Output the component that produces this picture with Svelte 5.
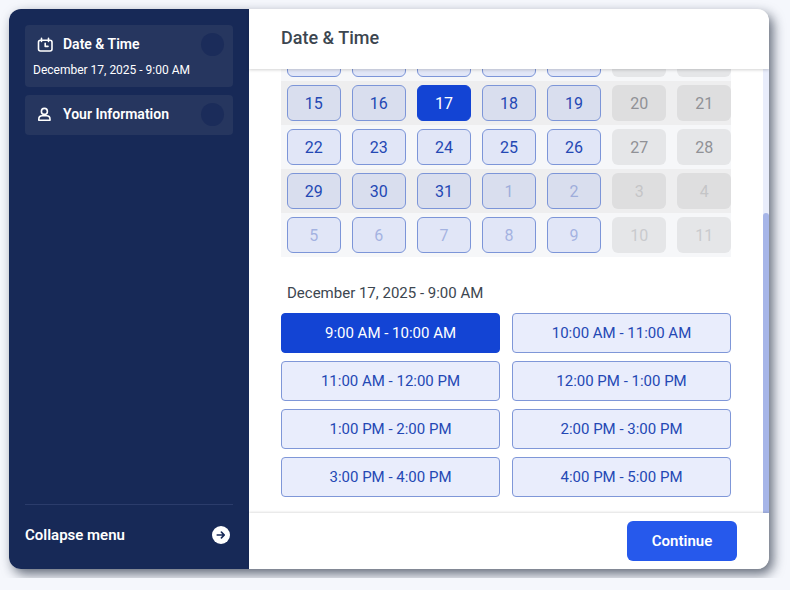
<script>
  const weeks = [
    [null, null, null, null, null, null, null],
    [15, 16, 17, 18, 19, 20, 21],
    [22, 23, 24, 25, 26, 27, 28],
    [29, 30, 31, 1, 2, 3, 4],
    [5, 6, 7, 8, 9, 10, 11]
  ];
  const slots = [
    '9:00 AM - 10:00 AM',
    '10:00 AM - 11:00 AM',
    '11:00 AM - 12:00 PM',
    '12:00 PM - 1:00 PM',
    '1:00 PM - 2:00 PM',
    '2:00 PM - 3:00 PM',
    '3:00 PM - 4:00 PM',
    '4:00 PM - 5:00 PM'
  ];

  let selectedSlot = slots[0];

  // days that belong to January
  const isOutside = (w, d) => (w === 3 && d > 2) || w === 4;
</script>

<div class="card">
  <aside class="sidebar">
    <div class="step">
      <div class="stepHead">
        <svg class="stepIcon" viewBox="0 0 18 18" width="18" height="18" fill="none" stroke="currentColor" stroke-width="1.6" stroke-linecap="round" stroke-linejoin="round">
          <rect x="1.5" y="5.2" width="13.5" height="10.8" rx="2" />
          <path d="M4.5 3.2v3.2M11.5 3.2v3.2M8.2 8.4v3h2.8" />
        </svg>
        <span class="stepTitle">Date &amp; Time</span>
        <span class="stepDot"></span>
      </div>
      <div class="stepSub">December 17, 2025 - 9:00 AM</div>
    </div>
    <div class="step">
      <div class="stepHead">
        <svg class="stepIcon" viewBox="0 0 18 18" width="18" height="18" fill="none" stroke="currentColor" stroke-width="1.6" stroke-linecap="round" stroke-linejoin="round">
          <circle cx="7.4" cy="6.4" r="3" />
          <path d="M1.8 15.2v-1c0-2 1.6-3.4 3.4-3.4h4.4c1.8 0 3.4 1.4 3.4 3.4v1z" />
        </svg>
        <span class="stepTitle">Your Information</span>
        <span class="stepDot"></span>
      </div>
    </div>

    <div class="collapse">
      <span>Collapse menu</span>
      <svg viewBox="0 0 18 18" width="18" height="18">
        <circle cx="9" cy="9" r="9" fill="#fff" />
        <path d="M5.2 9h7M9.4 6.1 12.3 9l-2.9 2.9" fill="none" stroke="#172957" stroke-width="1.6" stroke-linecap="round" stroke-linejoin="round" />
      </svg>
    </div>
  </aside>

  <main class="panel">
    <header class="panelHead">Date &amp; Time</header>

    <div class="scrollArea">
      <div class="content">
        <div class="calendar">
          {#each weeks as week, w}
            <div class="week" class:partial={w === 0}>
              {#each week as day, d}
                <button
                  class="day"
                  class:weekend={d > 4}
                  class:outside={isOutside(w, d)}
                  class:selected={day === 17}
                >
                  <span>{day ?? ''}</span>
                </button>
              {/each}
            </div>
          {/each}
        </div>

        <div class="chosen">December 17, 2025 - 9:00 AM</div>
        <div class="slots">
          {#each slots as slot}
            <button class="slot" class:active={slot === selectedSlot} on:click={() => (selectedSlot = slot)}>
              {slot}
            </button>
          {/each}
        </div>
      </div>
      <div class="track"><div class="thumb"></div></div>
    </div>

    <footer class="panelFoot">
      <button class="continue">Continue</button>
    </footer>
  </main>
</div>

<style>
  :global(body) {
    background: #f5f7fc;
    font-family: Roboto, 'Liberation Sans', sans-serif;
  }

  .card {
    display: flex;
    width: 760px;
    height: 560px;
    margin: 9px;
    border-radius: 12px;
    overflow: hidden;
    background: white;
    box-shadow: 4px 5px 12px rgba(20, 30, 50, 0.65);
  }

  .sidebar {
    width: 240px;
    flex-shrink: 0;
    box-sizing: border-box;
    padding: 16px 16px 0;
    display: flex;
    flex-direction: column;
    gap: 8px;
    background: #172957;
    color: white;
  }

  .step {
    background: #26365f;
    border-radius: 4px;
    padding: 8px 9px 10px 12px;
  }

  .stepHead {
    display: flex;
    align-items: center;
    height: 22px;
  }

  .stepIcon {
    margin-right: 8px;
    flex-shrink: 0;
  }

  .stepTitle {
    flex: 1;
    font-size: 14px;
    font-weight: 600;
  }

  .stepDot {
    width: 23px;
    height: 23px;
    border-radius: 50%;
    background: #1b2c5a;
  }

  .stepSub {
    margin: 9px 0 0 -4px;
    font-size: 12px;
    line-height: 13px;
    font-weight: 400;
  }

  .collapse {
    margin-top: auto;
    height: 65px;
    box-sizing: border-box;
    padding: 0 3px 5px 0;
    display: flex;
    align-items: center;
    justify-content: space-between;
    border-top: 1px solid #2b3c6b;
    font-size: 15px;
    font-weight: 600;
  }

  .panel {
    flex: 1;
    min-width: 0;
    display: flex;
    flex-direction: column;
  }

  .panelHead {
    height: 60px;
    flex-shrink: 0;
    box-sizing: border-box;
    padding: 0 32px 3px;
    display: flex;
    align-items: center;
    position: relative;
    z-index: 1;
    background: white;
    box-shadow: 0 1px 3px rgba(0, 0, 0, 0.18);
    font-size: 18px;
    font-weight: 500;
    color: #3c4650;
  }

  .scrollArea {
    flex: 1;
    min-height: 0;
    position: relative;
    overflow: hidden;
  }

  .content {
    padding: 0 38px 16px 32px;
  }

  .track {
    position: absolute;
    top: 0;
    right: 0;
    bottom: 0;
    width: 6px;
    background: #e9edfb;
  }

  .thumb {
    position: absolute;
    left: 0;
    right: 0;
    bottom: 0;
    height: 300px;
    background: #a6b5e8;
    border-radius: 3px 3px 0 0;
  }

  .week {
    display: grid;
    grid-template-columns: repeat(7, 53.5px);
    grid-auto-rows: 36px;
    justify-content: space-between;
    align-content: end;
    height: 44px;
    overflow: hidden;
    box-sizing: border-box;
    padding: 4px 0 4px 6px;
    background: #f6f7f9;
  }

  .week:nth-child(even) {
    background: #eeeeef;
  }

  .week.partial {
    height: 12px;
    padding-top: 0;
  }

  .day {
    box-sizing: border-box;
    padding: 0;
    border: 1px solid #7c95d8;
    border-radius: 6px;
    background: rgba(42, 92, 240, 0.1);
    font: 400 16px Roboto, sans-serif;
    color: #2448b4;
  }

  .day.weekend {
    border-color: transparent;
    background: rgba(0, 0, 0, 0.065);
    color: #909196;
  }

  .day.outside span {
    opacity: 0.32;
  }

  .day.selected {
    border-color: #1344d4;
    background: #1344d4;
    color: white;
  }

  .chosen {
    margin: 25px 0 0 6px;
    height: 31px;
    font-size: 15px;
    line-height: 22px;
    color: #3c4650;
  }

  .slots {
    display: grid;
    grid-template-columns: 1fr 1fr;
    gap: 8px 12px;
  }

  .slot {
    height: 40px;
    padding: 0;
    border: 1px solid #7f97d8;
    border-radius: 4px;
    background: #e9edfc;
    font: 400 15px Roboto, sans-serif;
    color: #2448b4;
  }

  .slot.active {
    border-color: #1344d4;
    background: #1344d4;
    color: white;
  }

  .panelFoot {
    height: 56px;
    flex-shrink: 0;
    box-sizing: border-box;
    padding-right: 32px;
    display: flex;
    align-items: center;
    justify-content: flex-end;
    position: relative;
    background: white;
    box-shadow: 0 -1px 2px rgba(0, 0, 0, 0.12);
  }

  .continue {
    width: 110px;
    height: 40px;
    border: 0;
    border-radius: 6px;
    background: #2659ec;
    color: white;
    font: 600 15px Roboto, sans-serif;
  }
</style>
